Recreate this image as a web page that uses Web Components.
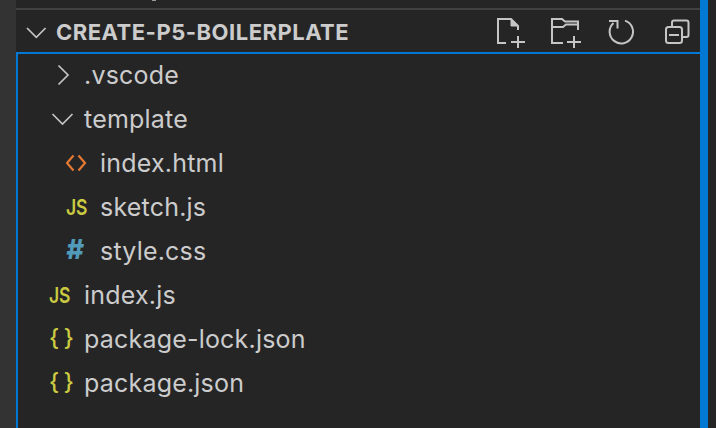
<!DOCTYPE html>
<html><head><meta charset="utf-8">
<style>
html,body{margin:0;height:100%;background:#252526;overflow:hidden}
</style></head>
<body>
<x-explorer>
  <x-tree-row level="1" twistie="closed">.vscode</x-tree-row>
  <x-tree-row level="1" twistie="open">template</x-tree-row>
  <x-tree-row level="2" icon="html">index.html</x-tree-row>
  <x-tree-row level="2" icon="js">sketch.js</x-tree-row>
  <x-tree-row level="2" icon="css">style.css</x-tree-row>
  <x-tree-row level="1" icon="js">index.js</x-tree-row>
  <x-tree-row level="1" icon="json">package-lock.json</x-tree-row>
  <x-tree-row level="1" icon="json">package.json</x-tree-row>
</x-explorer>
<script>
const ICONS={
 html:'<svg width="22" height="18" viewBox="0 0 22 18" fill="none" stroke="#e37933" stroke-width="2.2"><path d="M7.500 1.500 1 9l6.500 7.500M12.500 1.500 19 9l-6.500 7.500"/></svg>',
 js:'<span class="g js">JS</span>',
 css:'<span class="g css">#</span>',
 json:'<span class="g json">{ }</span>'
};
class TreeRow extends HTMLElement{
 connectedCallback(){
  const level=this.getAttribute('level'),tw=this.getAttribute('twistie'),ic=this.getAttribute('icon');
  const s=this.shadowRoot||this.attachShadow({mode:'open'});
  const base=level==='2'?48:31;
  const leadW=level==='2'?82:66;
  let inner='',pad=base;
  if(tw==='closed'){pad=39;inner='<svg width="13" height="22" viewBox="0 0 13 22" fill="none" stroke="#c5c5c5" stroke-width="1.700"><path d="M1.500 1.500 11 11l-9.500 9.500"/></svg>';}
  else if(tw==='open'){pad=33;inner='<svg width="24" height="14" viewBox="0 0 24 14" fill="none" stroke="#c5c5c5" stroke-width="1.700"><path d="M1.500 2 11.500 12 21.500 2"/></svg>';}
  else inner=ICONS[ic];
  s.innerHTML=`<style>
  :host{display:flex;align-items:center;height:44px;padding-bottom:2px;box-sizing:border-box;color:#cccccc;font:25px/42px Inter,"Noto Sans",sans-serif;letter-spacing:.2px;white-space:nowrap}
  .lead{display:flex;align-items:center;flex:none;box-sizing:border-box;width:${leadW}px;height:42px;padding-left:${pad}px;letter-spacing:0}
  .g{font-weight:600;line-height:42px;display:block;transform-origin:0 50%}
  .js{color:#cbcb41;font-size:22px;letter-spacing:-.2px;transform:scaleX(.8)}
  .css{color:#519aba;font-size:27px;font-weight:800;font-style:italic;transform:translateY(-1px)}
  .json{color:#cbcb41;font-size:23px;font-weight:500;word-spacing:-1.500px;transform:translateY(-1px)}
  svg{display:block}
  </style><span class="lead">${inner}</span><slot></slot>`;
 }
}
customElements.define('x-tree-row',TreeRow);
class Explorer extends HTMLElement{
 constructor(){super();
  this.attachShadow({mode:'open'}).innerHTML=`<style>
  :host{display:flex;height:428px;width:716px;box-sizing:border-box;background:#252526;overflow:hidden}
  .act{width:16px;background:#333333;flex:none}
  .main{width:684px;flex:none;display:flex;flex-direction:column}
  .top{height:8px;flex:none;display:flex;padding-left:136px;box-sizing:border-box}
  .top i{display:block;width:4px;height:1px;background:#9a9a9a}
  .rule{height:2px;background:#414141;flex:none}
  .head{height:42px;flex:none;display:flex;align-items:stretch;color:#cccccc}
  .head h2{margin:0;padding-top:2px;font:700 22px/40px Inter,"Noto Sans",sans-serif;letter-spacing:.5px;flex:1}
  .chev{margin:0 6px 0 6px;flex:none}
  .acts{display:flex;align-items:stretch;margin-right:10px}
  .acts svg{display:block;flex:none}
  .acts svg+svg{margin-left:24px}
  .acts svg.c{margin-left:29px}
  .tree{flex:1;border-top:2px solid #0078d4;border-left:2px solid #0078d4}
  .bar{width:8px;background:#0078d4;flex:none}
  .rest{flex:1}
  </style>
  <div class="act"></div>
  <div class="main">
   <div class="top"><i></i></div><div class="rule"></div>
   <div class="head">
    <svg class="chev" width="28" height="42" viewBox="22 10 28 42" fill="none" stroke="#c5c5c5" stroke-width="1.700"><path d="M27 28l9.300 9.300L45.600 28"/></svg>
    <h2>CREATE-P5-BOILERPLATE</h2>
    <div class="acts">
     <svg width="30" height="42" viewBox="496 10 30 42" fill="none" stroke="#c5c5c5" stroke-width="2"><path d="M505 43H497V19h13l7 7v4"/><path d="M510 19v7h7z" fill="#c5c5c5" stroke-width="1"/><path d="M517 36v12M510 42h14"/></svg>
     <svg width="32" height="42" viewBox="550 10 32 42" fill="none" stroke="#c5c5c5" stroke-width="2"><path d="M562 43H551V19h10l3 2.500h13V30M551 27h11l3-2.500h11"/><path d="M573 36v12M566 42h14"/></svg>
     <svg width="28" height="42" viewBox="606 10 28 42" fill="none" stroke="#c5c5c5" stroke-width="2"><path d="M624 20.600A11.700 11.700 0 1 1 612.500 23"/><path d="M608 21h8.500v7.500"/></svg>
     <svg class="c" width="26" height="42" viewBox="663 10 26 42" fill="none" stroke="#c5c5c5" stroke-width="2"><rect x="665" y="27" width="16" height="16" rx="2.500"/><path d="M671 27v-4.500a2 2 0 0 1 2-2h12.500a2 2 0 0 1 2 2V35a2 2 0 0 1-2 2H681M668 35h10"/></svg>
    </div>
   </div>
   <div class="tree"><slot></slot></div>
  </div>
  <div class="bar"></div><div class="rest"></div>`;
 }
}
customElements.define('x-explorer',Explorer);
</script>
</body></html>
